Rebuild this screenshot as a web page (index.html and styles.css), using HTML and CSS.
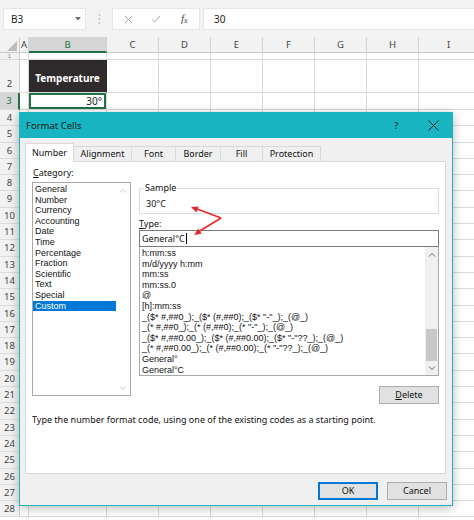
FILE: index.html
```html
<!DOCTYPE html>
<html>
<head>
<meta charset="utf-8">
<link rel="stylesheet" href="styles.css">
</head>
<body>
<div class="app">
  <div class="fbar">
    <div class="namebox"><span>B3</span><svg class="caret" width="6" height="4" viewBox="0 0 6 4"><path d="M0 0H6L3 3.5Z" fill="#6a6a6a"/></svg></div>
    <div class="fsep"><svg width="3" height="12" viewBox="0 0 3 12"><circle cx="1.5" cy="2" r="1" fill="#c4c4c4"/><circle cx="1.5" cy="6" r="1" fill="#c4c4c4"/><circle cx="1.5" cy="10" r="1" fill="#c4c4c4"/></svg></div>
    <div class="fbtns">
      <svg class="ic-x" width="9" height="9" viewBox="0 0 9 9"><path d="M1 1L8 8M8 1L1 8" stroke="#a8a8a8" stroke-width="1"/></svg>
      <svg class="ic-ok" width="10" height="8" viewBox="0 0 10 8"><path d="M1 4.5L3.8 7L9 1" stroke="#a8a8a8" stroke-width="1" fill="none"/></svg>
      <span class="fx">f<sub>x</sub></span>
    </div>
    <div class="finput">30</div>
  </div>

  <div class="sheet">
    <div class="row hdr">
      <div class="rh corner"><svg width="20" height="16" viewBox="0 0 20 16"><path d="M17 4V14H7Z" fill="#bdbdbd"/></svg></div>
      <div class="c ca">A</div>
      <div class="c cb colsel">B</div>
      <div class="c">C</div>
      <div class="c">D</div>
      <div class="c">E</div>
      <div class="c">F</div>
      <div class="c">G</div>
      <div class="c">H</div>
      <div class="c clast">I</div>
    </div>
    <div class="row r1">
      <div class="rh"><span>1</span></div>
      <div class="c ca"></div><div class="c cb"></div><div class="c"></div><div class="c"></div><div class="c"></div><div class="c"></div><div class="c"></div><div class="c"></div><div class="c clast"></div>
    </div>
    <div class="row r2">
      <div class="rh">2</div>
      <div class="c ca"></div><div class="c cb temp">Temperature</div><div class="c"></div><div class="c"></div><div class="c"></div><div class="c"></div><div class="c"></div><div class="c"></div><div class="c clast"></div>
    </div>
    <div class="row r3">
      <div class="rh rowsel">3</div>
      <div class="c ca"></div><div class="c cb active">30°</div><div class="c"></div><div class="c"></div><div class="c"></div><div class="c"></div><div class="c"></div><div class="c"></div><div class="c clast"></div>
    </div>
    <div class="body">
      <div class="rhcol">
        <div class="rh">4</div><div class="rh">5</div><div class="rh">6</div><div class="rh">7</div><div class="rh">8</div>
        <div class="rh">9</div><div class="rh">10</div><div class="rh">11</div><div class="rh">12</div><div class="rh">13</div>
        <div class="rh">14</div><div class="rh">15</div><div class="rh">16</div><div class="rh">17</div><div class="rh">18</div>
        <div class="rh">19</div><div class="rh">20</div><div class="rh">21</div><div class="rh">22</div><div class="rh">23</div>
        <div class="rh">24</div><div class="rh">25</div><div class="rh">26</div><div class="rh">27</div><div class="rh">28</div>
      </div>
      <div class="strip ca"></div>
      <div class="strip cb"></div>
      <div class="strip"></div>
      <div class="strip"></div>
      <div class="strip"></div>
      <div class="strip"></div>
      <div class="strip"></div>
      <div class="strip"></div>
      <div class="strip clast"></div>
    </div>
  </div>

  <div class="dialog">
    <div class="title">
      <span class="ttext">Format Cells</span>
      <span class="help">?</span>
      <svg class="close" width="11" height="11" viewBox="0 0 11 11"><path d="M0.5 0.5L10.5 10.5M10.5 0.5L0.5 10.5" stroke="#1e1e1e" stroke-width="1"/></svg>
    </div>
    <div class="tabs">
      <div class="tab t-number sel">Number</div>
      <div class="tab t-align">Alignment</div>
      <div class="tab t-font">Font</div>
      <div class="tab t-border">Border</div>
      <div class="tab t-fill">Fill</div>
      <div class="tab t-prot">Protection</div>
    </div>
    <div class="panel">
      <div class="pcols">
        <div class="lcol">
          <div class="lbl"><u>C</u>ategory:</div>
          <div class="listbox catlist">
            <div class="items">
              <div class="it">General</div>
              <div class="it">Number</div>
              <div class="it">Currency</div>
              <div class="it">Accounting</div>
              <div class="it">Date</div>
              <div class="it">Time</div>
              <div class="it">Percentage</div>
              <div class="it">Fraction</div>
              <div class="it">Scientific</div>
              <div class="it">Text</div>
              <div class="it">Special</div>
              <div class="it hl">Custom</div>
            </div>
            <div class="vscroll light">
              <svg width="8" height="5" viewBox="0 0 8 5"><path d="M1 4.5L4 1.5L7 4.5" stroke="#c6c6c6" fill="none"/></svg>
              <svg width="8" height="5" viewBox="0 0 8 5"><path d="M1 0.5L4 3.5L7 0.5" stroke="#c6c6c6" fill="none"/></svg>
            </div>
          </div>
        </div>
        <div class="rcol">
          <fieldset class="sample">
            <legend>Sample</legend>
            <div class="sval">30°C</div>
          </fieldset>
          <div class="lbl tlbl"><u>T</u>ype:</div>
          <div class="tinput">General°C<span class="cursor"></span></div>
          <div class="listbox typelist">
            <div class="items">
              <div class="it">h:mm:ss</div>
              <div class="it">m/d/yyyy h:mm</div>
              <div class="it">mm:ss</div>
              <div class="it">mm:ss.0</div>
              <div class="it">@</div>
              <div class="it">[h]:mm:ss</div>
              <div class="it">_($* #,##0_);_($* (#,##0);_($* "-"_);_(@_)</div>
              <div class="it">_(* #,##0_);_(* (#,##0);_(* "-"_);_(@_)</div>
              <div class="it">_($* #,##0.00_);_($* (#,##0.00);_($* "-"??_);_(@_)</div>
              <div class="it">_(* #,##0.00_);_(* (#,##0.00);_(* "-"??_);_(@_)</div>
              <div class="it">General°</div>
              <div class="it">General°C</div>
            </div>
            <div class="vscroll dark">
              <div class="arr"><svg width="8" height="5" viewBox="0 0 8 5"><path d="M1 4.5L4 1.5L7 4.5" stroke="#606060" fill="none"/></svg></div>
              <div class="track"></div>
              <div class="thumb"></div>
              <div class="arr"><svg width="8" height="5" viewBox="0 0 8 5"><path d="M1 0.5L4 3.5L7 0.5" stroke="#606060" fill="none"/></svg></div>
            </div>
          </div>
          <div class="btn del"><u>D</u>elete</div>
        </div>
      </div>
      <div class="hint">Type the number format code, using one of the existing codes as a starting point.</div>
    </div>
    <div class="footer">
      <div class="btn ok">OK</div>
      <div class="btn cancel">Cancel</div>
    </div>
  </div>

  <svg class="arrows" width="474" height="520" viewBox="0 0 474 520">
    <path d="M221 218L196 208.5M221 218L199 231.5" stroke="#e42a2a" stroke-width="1.6" fill="none"/>
    <path d="M191 207L198.6 206.4L196.4 212.4Z" fill="#e42a2a"/>
    <path d="M194 235L201.6 233.8L198.3 228.6Z" fill="#e42a2a"/>
  </svg>
</div>
</body>
</html>
```

FILE: styles.css
```css
* { box-sizing: border-box; }
body { margin: 0; background: #fff; font-family: "Noto Sans", sans-serif; }
.app { position: relative; width: 474px; height: 520px; overflow: hidden; background: #fff; }

/* formula bar */
.fbar { height: 37px; background: #f3f3f3; display: flex; align-items: flex-start; padding: 8px 0 0 3px; }
.namebox { width: 83px; height: 22px; background: #fff; border: 1px solid #e6e6e6; display: flex; align-items: center; justify-content: space-between; padding: 0 4px 0 7px; font-size: 10px; color: #222; }
.fsep { width: 26px; height: 22px; display: flex; align-items: center; justify-content: center; }
.fbtns { width: 88px; height: 22px; background: #fff; border: 1px solid #e6e6e6; display: flex; align-items: center; padding-left: 11px; }
.ic-ok { margin-left: 18px; }
.fx { margin-left: 20px; font-family: "Liberation Serif", serif; font-style: italic; font-size: 11px; color: #444; line-height: 1; }
.fx sub { font-size: 8px; vertical-align: -1px; }
.finput { flex: 1; height: 22px; margin-left: 3px; background: #fff; border: 1px solid #e6e6e6; border-right: none; padding-left: 10px; font-size: 10px; line-height: 20px; color: #222; }

/* sheet */
.sheet { display: flex; flex-direction: column; }
.row { display: flex; }
.rh { width: 20px; flex: none; background: #f2f2f2; border-right: 1px solid #cfcfcf; border-bottom: 1px solid #dcdcdc; font-size: 9.5px; color: #444; text-align: center; overflow: hidden; }
.c { width: 52px; flex: none; border-right: 1px solid #dadada; border-bottom: 1px solid #dadada; font-size: 9.5px; color: #444; overflow: hidden; }
.ca { width: 9px; }
.cb { width: 78px; }
.clast { width: 60px; }
.hdr { height: 16px; }
.hdr .c { background: #f2f2f2; text-align: center; line-height: 15px; border-right-color: #d2d2d2; border-bottom-color: #c9c9c9; }
.hdr .rh { line-height: 15px; border-bottom-color: #c9c9c9; }
.hdr .colsel { background: #d6d6d6; color: #217346; border-bottom: 2px solid #217346; }
.corner svg { display: block; }
.r1 { height: 7px; }
.r1 .rh { line-height: 6px; font-size: 5px; color: #777; font-family: "Liberation Sans", sans-serif; }
.r2 { height: 33px; }
.r2 .rh { display: flex; align-items: flex-end; justify-content: center; padding-bottom: 1px; line-height: 14px; }
.temp { background: #2f2b2c; color: #fff; font-weight: bold; font-size: 10px; display: flex; align-items: flex-end; justify-content: center; padding-bottom: 7px; border-right-color: #2f2b2c; }
.r3 { height: 17px; }
.r3 .rh { line-height: 16px; }
.rowsel { background: #d6d6d6; color: #217346; border-right: 2px solid #217346; }
.active { box-shadow: inset 0 0 0 2px #217346; text-align: right; padding-right: 4px; font-size: 10px; color: #222; line-height: 17px; }

.body { display: flex; }
.rhcol { display: flex; flex-direction: column; width: 20px; flex: none; }
.rhcol .rh { height: 16.3px; line-height: 16px; }
.strip { width: 52px; flex: none; height: 408px; border-right: 1px solid #dadada; background: repeating-linear-gradient(to bottom, transparent 0, transparent 15.3px, #dadada 15.3px, #dadada 16.3px); }
.strip.ca { width: 9px; }
.strip.cb { width: 78px; }
.strip.clast { width: 60px; }

/* dialog */
.dialog { position: absolute; left: 19px; top: 112px; width: 434px; height: 394px; background: #f0f0f0; border: 1px solid #19b4c1; box-shadow: 0 2px 10px rgba(0,0,0,0.28); display: flex; flex-direction: column; font-size: 9px; color: #111; }
.title { height: 25px; flex: none; background: #19b4c1; display: flex; align-items: center; padding-left: 6px; }
.ttext { font-size: 9.5px; color: #1b1b1b; }
.help { margin-left: auto; font-size: 9.5px; color: #1b1b1b; }
.close { margin-left: 30px; margin-right: 13px; }

.tabs { height: 23px; flex: none; display: flex; align-items: flex-end; padding-left: 5px; position: relative; z-index: 2; }
.tab { height: 15px; background: #f0f0f0; border: 1px solid #d9d9d9; border-bottom: none; margin-right: -1px; text-align: center; line-height: 13px; color: #111; }
.tab.sel { height: 19px; background: #fff; margin-bottom: -1px; line-height: 17px; position: relative; z-index: 3; }
.t-number { width: 49px; }
.t-align { width: 59px; }
.t-font { width: 45px; }
.t-border { width: 46px; }
.t-fill { width: 43px; }
.t-prot { width: 59px; }

.panel { height: 313px; flex: none; margin: 0 6px 0 5px; background: #fff; border: 1px solid #d9d9d9; position: relative; z-index: 1; }
.pcols { display: flex; padding: 5px 0 0 6px; }
.lcol { width: 99px; flex: none; display: flex; flex-direction: column; }
.lbl { height: 15px; line-height: 12px; padding-left: 1px; }
.listbox { border: 1px solid #a8a8a8; display: flex; background: #fff; }
.catlist { height: 214px; }
.items { flex: 1; padding-top: 1px; overflow: hidden; }
.it { height: 10.6px; line-height: 10.6px; padding-left: 2px; white-space: nowrap; font-family: "Liberation Sans", Arial, sans-serif; font-size: 9px; }
.catlist .it.hl { background: #0078d7; color: #fff; }
.vscroll { width: 14px; flex: none; display: flex; flex-direction: column; align-items: center; }
.vscroll.light { justify-content: space-between; padding: 5px 0 4px; }
.rcol { width: 300px; flex: none; margin-left: 8px; margin-top: 15px; display: flex; flex-direction: column; }
.sample { margin: 0; padding: 0 4px 2px; border: 1px solid #dcdcdc; height: 32px; }
.sample legend { padding: 0 1px; line-height: 12px; }
.sval { padding-top: 4px; line-height: 12px; padding-left: 2px; }
.tlbl { margin-top: 3px; height: 13px; line-height: 13px; padding-left: 0; }
.tinput { height: 17px; border: 1px solid #7a7a7a; line-height: 15px; padding-left: 2px; display: flex; align-items: center; }
.cursor { display: inline-block; width: 1px; height: 11px; background: #000; margin-left: 1px; }
.typelist { height: 129px; border-top: none; border-color: #a8a8a8; }
.typelist .items { padding-top: 1px; }
.vscroll.dark { width: 13px; background: #f0f0f0; margin-right: 0; }
.arr { height: 14px; width: 13px; display: flex; align-items: center; justify-content: center; flex: none; }
.track { flex: 1; }
.thumb { height: 32px; width: 11px; background: #c8c8c8; flex: none; }
.btn { height: 18px; width: 60px; background: #e1e1e1; border: 1px solid #adadad; text-align: center; line-height: 16px; color: #111; }
.del { align-self: flex-end; margin-top: 10px; }
.hint { margin-top: 10px; padding-left: 6px; line-height: 12px; color: #111; }

.footer { flex: 1; display: flex; justify-content: flex-end; align-items: flex-start; padding: 8px 5px 0 0; gap: 9px; }
.ok { border: 2px solid #0078d7; line-height: 14px; }

.arrows { position: absolute; left: 0; top: 0; z-index: 10; }
```
